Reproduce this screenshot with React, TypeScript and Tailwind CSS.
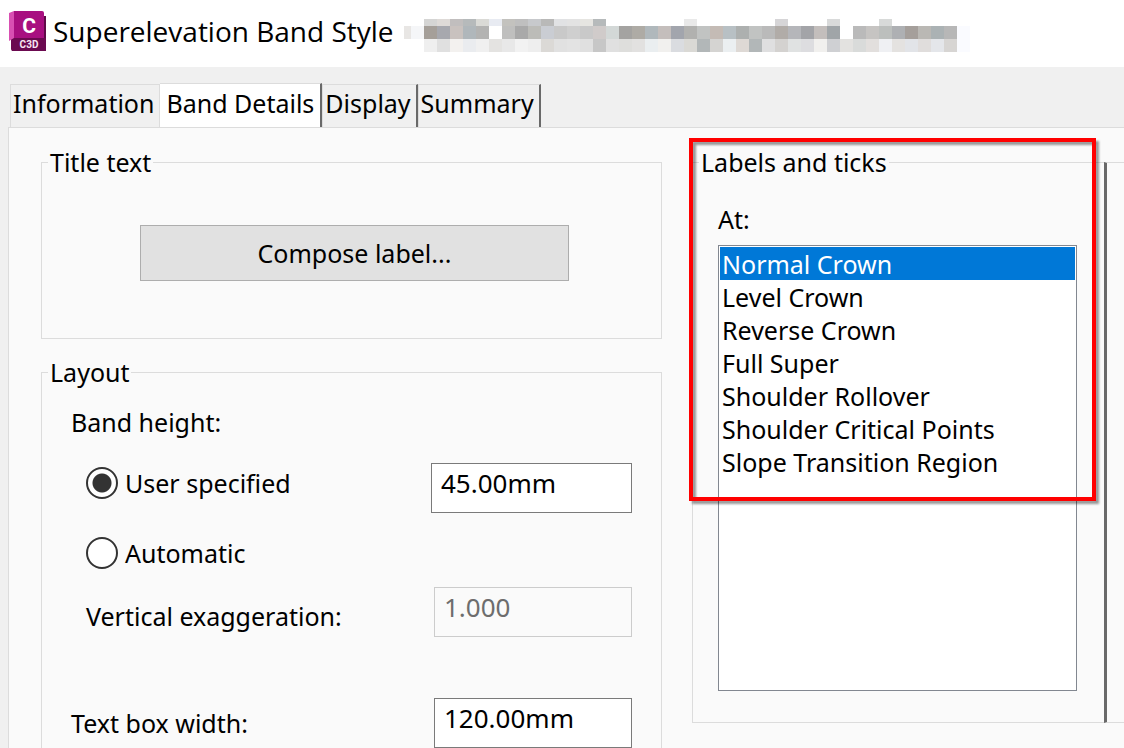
import { useState } from "react";

const TABS = ["Information", "Band Details", "Display", "Summary"];

const LOCATIONS = [
  "Normal Crown",
  "Level Crown",
  "Reverse Crown",
  "Full Super",
  "Shoulder Rollover",
  "Shoulder Critical Points",
  "Slope Transition Region",
];

// pixelated style name, one hex per cell ("-" = empty)
const MOSAIC = [
  "d5d5d4 dedad7 c1bebe b6babb dadad6 e8ebf2 c3c2be bfbfbf c7c9cc b9b9b8 e1e2e4 e3e3e3 e6e5e1 b6babb - - - - - - e9e9e9 - - - - - - d6d5d7 - - - d9dada - - - d8dad9",
  "a59f99 a7a8ae c9c2bf b0b7bb b3b3b2 - bfbfbe a9a9a9 bcbcb8 cacdd3 c9c9c9 cfcfcf c9c9c9 d0cbca d3d8d7 a4a3a1 aeaba5 b0b8bc c4bebc a2a5ad b1b1af c1c3c2 c4bbb5 b8c0c4 adb0af c1c3c2 bababa b1aca8 b5b6ba a3a4a8 c3bebc a0a5a8 - bababa c6c4c2 bcbfbd aeb0b3 a59f9b bab8b4 abb2b4 b7b7b7 fafbff",
  "efefef e0e0e0 f3f1ef eaecef f0f0f0 e4e3e1 e8e8e8 f2f2f2 eeeeee dbd9d6 e1e1e1 e3e3e3 e0e0e0 c7c7c7 e0e0e0 dededc e2e1e0 eaeef0 f1f0ee dadce0 dad9d5 b2b7b8 d5d4d2 ebeff1 ded9d5 b2b7b8 dfdfe0 d4d2d0 e0e2e2 dddde0 f1f0ee cfd0d3 e3e2e0 d9dbda e2dfdd eff0f3 e4e2e0 e2e4e8 e0dddc e4e6ea d7d5d3 fafbff",
].map(row => row.split(" "));

function Logo() {
  return (
    <svg width="37" height="40" viewBox="0 0 37 40" className="shrink-0" aria-hidden="true">
      <path d="M5 5h32v35H3V27z" fill="#5f0a48" />
      <path d="M2 27h35v13H4a2 2 0 0 1-2-2z" fill="#6b0a50" />
      <path d="M0 2l5-2v27l-5 3z" fill="#d84fb2" />
      <path d="M5 0h28a2 2 0 0 1 2 2v25H5z" fill="#a80f80" />
      <text x="20" y="22" fontSize="21" fontWeight="700" fill="#fff" textAnchor="middle" fontFamily="Roboto, sans-serif">C</text>
      <text x="20" y="37" fontSize="10" fontWeight="700" fill="#f7e6f2" textAnchor="middle" fontFamily="Roboto, sans-serif">C3D</text>
    </svg>
  );
}

function Mosaic() {
  return (
    <svg width="566" height="33" viewBox="0 0 566 33" className="shrink-0" shapeRendering="crispEdges" aria-hidden="true">
      <rect x="0" y="7" width="7" height="13" fill="#e8e6e4" />
      <rect x="7" y="7" width="13" height="13" fill="#f5f6f8" />
      {MOSAIC.map((row, r) =>
        row.map((c, i) =>
          c === "-" ? null : (
            <rect key={`${r}-${i}`} x={20 + i * 13} y={r === 0 ? 0 : r * 13 - 6} width="13" height={r === 0 ? 7 : 13} fill={`#${c}`} />
          )
        )
      )}
    </svg>
  );
}

function Radio({ label, checked, onChange }: { label: string; checked: boolean; onChange: () => void }) {
  return (
    <label className="flex h-10 items-center gap-[7px]">
      <input
        type="radio"
        name="bandHeight"
        checked={checked}
        onChange={onChange}
        className="size-8 appearance-none rounded-full border-2 border-[#333] bg-white checked:bg-[radial-gradient(circle,#333_9px,#fff_10px)]"
      />
      {label}
    </label>
  );
}

export default function App() {
  const [tab, setTab] = useState("Band Details");
  const [mode, setMode] = useState("user");
  const [height, setHeight] = useState("45.00mm");
  const [boxWidth, setBoxWidth] = useState("120.00mm");
  const [at, setAt] = useState("Normal Crown");

  return (
    <div className="flex h-screen flex-col overflow-hidden bg-[#f0f0f0] font-['Tahoma','Noto_Sans',sans-serif] text-[25px] leading-[34px] text-black">
      <header className="flex h-[67px] shrink-0 items-center bg-white pr-4 pb-[5px] pl-[9px]">
        <Logo />
        <h1 className="ml-[7px] text-[28px] whitespace-nowrap font-['Segoe_UI','Open_Sans',sans-serif]">Superelevation Band Style</h1>
        <div className="ml-[10px] pt-2">
          <Mosaic />
        </div>
      </header>

      <div role="tablist" className="flex h-[60px] shrink-0 items-end pl-[10px]">
        {TABS.map(t => (
          <button
            key={t}
            role="tab"
            aria-selected={tab === t}
            onClick={() => setTab(t)}
            className={
              tab === t
                ? "h-11 border-t border-r-2 border-t-[#dcdcdc] border-r-[#696969] bg-white px-[6px] pb-[6px]"
                : "h-[43px] border-t border-l border-[#dcdcdc] pr-[5px] pb-[6px] pl-[2px] first:border-r not-first:border-r-2 not-first:border-r-[#696969]"
            }
          >
            {t}
          </button>
        ))}
      </div>

      <main className="ml-2 flex min-h-0 flex-1 border-t border-l border-[#dcdcdc] bg-[#fafafa] pt-[17px] pl-8">
        <div className="grid flex-1 grid-cols-[621fr_412fr] gap-[30px]">
          <div className="flex flex-col">
            <fieldset className="h-[194px] border border-[#dcdcdc]">
              <legend className="ml-[6px] px-[2px]">Title text</legend>
              <div className="mt-[46px] mr-[92px] ml-[98px] flex">
                <button className="h-14 flex-1 border border-[#adadad] bg-[#e1e1e1]">Compose label...</button>
              </div>
            </fieldset>

            <fieldset className="mt-4 flex-1 border border-b-0 border-[#dcdcdc] px-[29px]">
              <legend className="-ml-[23px] px-[2px]">Layout</legend>
              <p className="mt-4">Band height:</p>
              <div className="mt-6 flex items-start justify-between pl-[15px]">
                <Radio label="User specified" checked={mode === "user"} onChange={() => setMode("user")} />
                <input
                  aria-label="User specified height"
                  value={height}
                  onChange={e => setHeight(e.target.value)}
                  className="h-[50px] w-[201px] border border-[#7a7a7a] bg-white px-[9px] pb-[10px] text-[26px]"
                />
              </div>
              <div className="mt-5 flex pl-[15px]">
                <Radio label="Automatic" checked={mode === "auto"} onChange={() => setMode("auto")} />
              </div>
              <div className="mt-[14px] flex items-end justify-between pl-[15px]">
                <label htmlFor="exaggeration" className="leading-[42px]">Vertical exaggeration:</label>
                <input
                  id="exaggeration"
                  disabled
                  defaultValue="1.000"
                  className="h-[50px] w-[198px] border border-[#ccc] px-[9px] pb-[10px] text-[26px] text-[#6d6d6d]"
                />
              </div>
              <div className="mt-[61px] flex items-center justify-between">
                <label htmlFor="boxWidth">Text box width:</label>
                <input
                  id="boxWidth"
                  value={boxWidth}
                  onChange={e => setBoxWidth(e.target.value)}
                  className="h-[50px] w-[198px] border border-[#7a7a7a] bg-white px-[9px] pb-[10px] text-[26px]"
                />
              </div>
            </fieldset>
          </div>

          <div className="relative self-start">
            <fieldset className="h-[578px] border border-r-0 border-[#dcdcdc] pr-[27px] pl-[25px]">
              <legend className="-ml-[19px] px-[2px]">Labels and ticks</legend>
              <label htmlFor="at" className="mt-[23px] block">At:</label>
              <select
                id="at"
                size={13}
                value={at}
                onChange={e => setAt(e.target.value)}
                className="mt-[9px] block h-[446px] w-full overflow-hidden border border-[#828790] bg-white p-px outline-none"
              >
                {LOCATIONS.map(l => (
                  <option
                    key={l}
                    value={l}
                    className="h-[33px] min-h-0 px-[2px] pt-0 pb-[3px] leading-[30px] checked:bg-[linear-gradient(#0078d7,#0078d7)] checked:text-white"
                  >
                    {l}
                  </option>
                ))}
              </select>
            </fieldset>
            {/* callout */}
            <div className="pointer-events-none absolute -top-[7px] right-2 -left-[3px] h-[363px] border-4 border-[#f00] drop-shadow-[3px_3px_1px_rgba(0,0,0,0.4)]" />
          </div>
        </div>
        <div className="mt-[17px] h-[561px] w-5 shrink-0 border-y border-l-3 border-y-[#dcdcdc] border-l-[#696969]" />
      </main>
    </div>
  );
}
